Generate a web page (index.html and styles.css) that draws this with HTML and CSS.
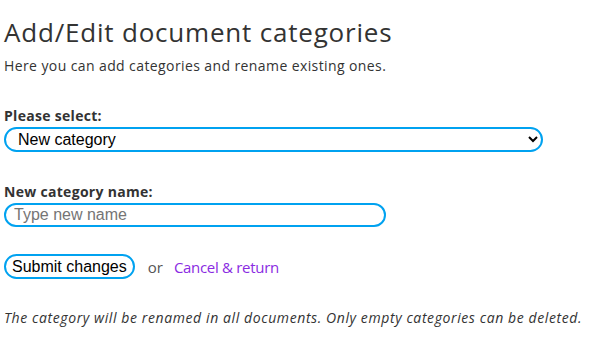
FILE: index.html
```html
<!DOCTYPE html>
<html>
<head>
<meta charset="utf-8">
<link rel="stylesheet" href="styles.css">
</head>
<body>
<div class="page">
  <h1 class="title">Add/Edit document categories</h1>
  <p class="intro">Here you can add categories and rename existing ones.</p>
  <form class="form">
    <div class="field field-select">
      <label class="label" for="cat">Please select:</label>
      <select id="cat" class="select"><option>New category</option></select>
    </div>
    <div class="field field-name">
      <label class="label" for="name">New category name:</label>
      <input id="name" class="input" type="text" placeholder="Type new name">
    </div>
    <div class="actions">
      <button type="button" class="btn">Submit changes</button>
      <span class="or">or</span>
      <a class="link" href="#">Cancel &amp; return</a>
    </div>
  </form>
  <p class="note">The category will be renamed in all documents. Only empty categories can be deleted.</p>
</div>
</body>
</html>
```
FILE: styles.css
```css
html, body { margin: 0; padding: 0; background: #fff; }
body { font-family: "Open Sans", sans-serif; color: #333; }
.page { padding: 0 4px; }
.title { font-weight: 400; font-size: 26px; line-height: 30px; margin: 17px 0 0; color: #333; letter-spacing: 0.8px; }
.intro { font-size: 14px; line-height: 20px; margin: 9px 0 0; letter-spacing: 0.4px; }
.form { margin-top: 31px; }
.field { display: flex; flex-direction: column; align-items: flex-start; }
.field-select { margin-bottom: 31px; }
.field-name { margin-bottom: 27px; }
.label { font-weight: 700; font-size: 14px; line-height: 18px; margin-bottom: 2px; letter-spacing: 0.3px; }
.select { width: 539px; height: 25px; border: 2px solid #00a2f0; border-radius: 13px; background: #fff; font-family: "Liberation Sans", Arial, sans-serif; font-size: 16px; color: #000; padding: 0 8px; outline: none; }
.input { width: 382px; height: 24px; box-sizing: border-box; border: 2px solid #00a2f0; border-radius: 12px; font-family: "Liberation Sans", Arial, sans-serif; font-size: 16px; padding: 0 8px; outline: none; }
.input::placeholder { color: #757575; }
.actions { display: flex; align-items: center; gap: 13px; }
.btn { height: 25px; border: 2px solid #00a2f0; border-radius: 13px; background: #fff; font-family: "Liberation Sans", Arial, sans-serif; font-size: 16px; color: #000; padding: 0 6px; }
.or { font-size: 15px; color: #555; }
.link { font-size: 15px; color: #8a2be2; text-decoration: none; letter-spacing: -0.3px; margin-left: -2px; }
.note { font-style: italic; font-size: 14px; line-height: 20px; margin: 29px 0 0; letter-spacing: 0.6px; }
```
